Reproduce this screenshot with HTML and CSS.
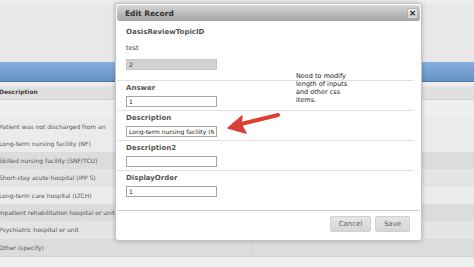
FILE: index.html
```html
<!DOCTYPE html>
<html lang="en">
<head>
  <meta charset="UTF-8">
  <title>Edit Record</title>
  <link rel="stylesheet" href="styles.css">
</head>
<body>
  <div class="page">
    <div class="toolbar"></div>
    <div class="grid-caption"></div>
    <div class="grid">
      <div class="grid-row grid-head"><div class="cell">Description</div><div class="cell"></div></div>
      <div class="grid-row filter"><div class="cell"></div><div class="cell"></div></div>
      <div class="grid-row"><div class="cell">Patient was not discharged from an</div><div class="cell"></div></div>
      <div class="grid-row"><div class="cell">Long-term nursing facility (NF)</div><div class="cell"></div></div>
      <div class="grid-row alt"><div class="cell">Skilled nursing facility (SNF/TCU)</div><div class="cell"></div></div>
      <div class="grid-row mid"><div class="cell">Short-stay acute hospital (IPP S)</div><div class="cell"></div></div>
      <div class="grid-row"><div class="cell">Long-term care hospital (LTCH)</div><div class="cell"></div></div>
      <div class="grid-row alt"><div class="cell">Inpatient rehabilitation hospital or unit</div><div class="cell"></div></div>
      <div class="grid-row mid"><div class="cell">Psychiatric hospital or unit</div><div class="cell"></div></div>
      <div class="grid-row alt"><div class="cell">Other (specify)</div><div class="cell"></div></div>
    </div>
    <div class="grid-footer"></div>
  </div>

  <div class="dialog">
    <div class="dialog-title">
      <span>Edit Record</span>
      <button class="close">&#215;</button>
    </div>
    <div class="dialog-body">
      <div class="field first">
        <label>OasisReviewTopicID</label>
        <p class="value">test</p>
        <input type="text" class="readonly" value="2" disabled>
      </div>
      <div class="field">
        <label>Answer</label>
        <input type="text" value="1">
      </div>
      <div class="field">
        <label>Description</label>
        <input type="text" value="Long-term nursing facility (NF)">
      </div>
      <div class="field">
        <label>Description2</label>
        <input type="text" value="">
      </div>
      <div class="field last">
        <label>DisplayOrder</label>
        <input type="text" value="1">
      </div>
      <p class="note">Need to modify<br>length of inputs<br>and other css<br>items.</p>
    </div>
    <div class="dialog-footer">
      <button class="btn cancel">Cancel</button>
      <button class="btn save">Save</button>
    </div>
  </div>

  <svg class="arrow" width="66" height="34" viewBox="0 0 66 34">
    <path d="M21 16 L58 7" stroke="#dc4035" stroke-width="4" stroke-linecap="round" fill="none"/>
    <path d="M8 20 L22 8 L21 16 L26 25 Z" fill="#dc4035" stroke="#dc4035" stroke-width="1.5" stroke-linejoin="round"/>
  </svg>
</body>
</html>
```

FILE: styles.css
```css
body {
  margin: 0;
  width: 474px;
  height: 267px;
  overflow: hidden;
  font-family: 'DejaVu Sans', Verdana, sans-serif;
  background-color: #e4e4e4;
  color: #333;
  position: relative;
}
.toolbar {
  height: 62px;
  background: linear-gradient(#f0f0f0, #e8e8e8 6px, #e8e8e8);
}
.grid-caption {
  height: 19px;
  background: linear-gradient(#86aedb, #6592c6);
  border-bottom: 1px solid #4b78ab;
}
.grid-row {
  display: grid;
  grid-template-columns: 252px 1fr;
  height: 17.3px;
  background-color: #ebebeb;
  font-size: 6px;
  color: #555;
}
.grid-row .cell {
  line-height: 17.3px;
  white-space: nowrap;
  overflow: hidden;
  margin-left: -1px;
}
.grid-row .cell + .cell {
  border-left: 1px solid #d2d2d2;
  margin-left: 0;
}
.grid-row.alt {
  background-color: #dcdcdc;
}
.grid-row.mid {
  background-color: #e4e4e4;
}
.grid-head {
  height: 17px;
  background: linear-gradient(#eeeeee, #eeeeee 4px, #e0e0e0 4px);
  border-bottom: 1px solid #d0d0d0;
  font-weight: bold;
  color: #444;
}
.grid-head .cell {
  line-height: 19px;
}
.grid-row.filter {
  height: 17.5px;
  background-color: #efefef;
}
.grid-footer {
  height: 11px;
  border-top: 1px solid #d4d4d4;
  background-color: #efefef;
}

/* dialog */
.dialog {
  position: absolute;
  left: 115px;
  top: 3px;
  width: 307px;
  box-sizing: border-box;
  padding: 1px;
  background-color: #fff;
  border: 1px solid #c4c4c4;
  border-radius: 3px;
  box-shadow: 0 0 4px rgba(0, 0, 0, 0.25);
}
.dialog-title {
  height: 16px;
  display: flex;
  align-items: center;
  justify-content: space-between;
  padding: 0 2px 0 8px;
  background: linear-gradient(#d6d6d6, #a4a4a4);
  border-radius: 3px;
  font-size: 7.5px;
  font-weight: bold;
  color: #333;
}
.close {
  width: 11px;
  height: 11px;
  padding: 0;
  border: 1px solid #b4b4b4;
  border-radius: 2px;
  background: linear-gradient(#ececec, #d4d4d4);
  font-family: 'DejaVu Sans', sans-serif;
  font-size: 9px;
  font-weight: bold;
  line-height: 8px;
  color: #222;
}
.dialog-body {
  position: relative;
}
.field {
  padding: 2px 0 3px 9px;
  margin-right: 5px;
  border-bottom: 1px solid #e0e0e0;
  border-radius: 0 0 3px 0;
}
.field label {
  display: block;
  height: 11px;
  line-height: 11px;
  font-size: 7px;
  font-weight: bold;
  color: #555;
}
.field input {
  display: block;
  box-sizing: border-box;
  width: 91px;
  height: 11px;
  margin: 2px 0 0 0;
  padding: 0 2px;
  border: 1px solid #a6a6a6;
  font-family: 'DejaVu Sans', sans-serif;
  font-size: 6px;
  color: #222;
  background-color: #fff;
}
.field input.readonly {
  background-color: #d2d2d2;
  border-color: #c6c6c6;
  color: #333;
}
.field.first {
  padding-top: 5.5px;
  padding-bottom: 10px;
}
.field.first .value {
  margin: 5px 0 0 0;
  height: 11px;
  line-height: 11px;
  font-size: 6.5px;
  color: #333;
}
.field.first input {
  margin-top: 5.5px;
}
.field.last {
  border-bottom: none;
  padding-bottom: 13px;
}
.note {
  position: absolute;
  left: 179px;
  top: 51px;
  margin: 0;
  font-size: 6.5px;
  line-height: 8px;
  color: #222;
}
.dialog-footer {
  height: 29px;
  box-sizing: border-box;
  border-top: 1px solid #cfcfcf;
  display: flex;
  justify-content: flex-end;
  align-items: flex-start;
  gap: 4px;
  padding: 5px 10px 0 0;
}
.btn {
  height: 16px;
  padding: 0;
  border: 1px solid #d0d0d0;
  border-radius: 2px;
  background: linear-gradient(#e6e6e6, #d6d6d6);
  font-family: 'DejaVu Sans', sans-serif;
  font-size: 7px;
  color: #666;
}
.btn.cancel {
  width: 41px;
}
.btn.save {
  width: 35px;
}
.arrow {
  position: absolute;
  left: 220px;
  top: 108px;
}
```
